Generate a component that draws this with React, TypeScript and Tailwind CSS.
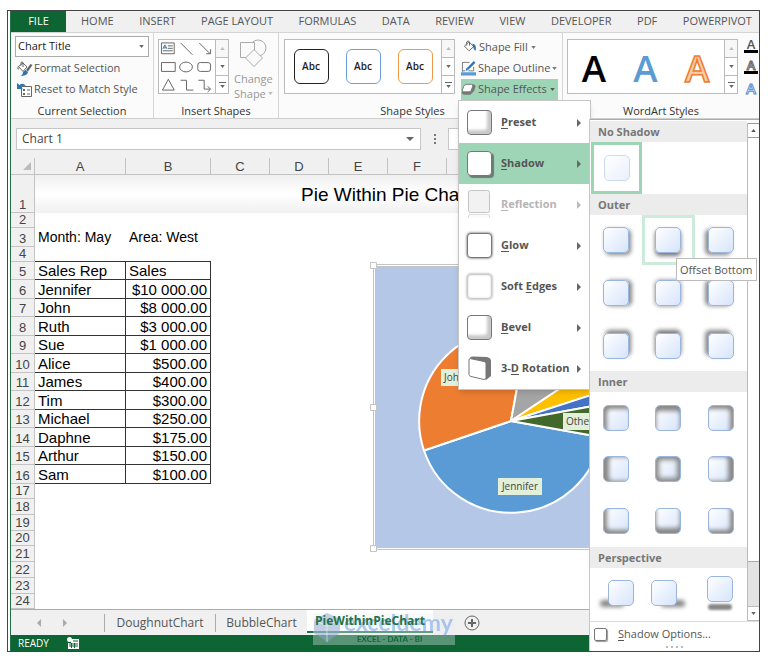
import clsx from 'clsx';

const ribbonTabs = ['HOME', 'INSERT', 'PAGE LAYOUT', 'FORMULAS', 'DATA', 'REVIEW', 'VIEW', 'DEVELOPER', 'PDF', 'POWERPIVOT'];

const sales = [
  ['Jennifer', '$10 000.00'],
  ['John', '$8 000.00'],
  ['Ruth', '$3 000.00'],
  ['Sue', '$1 000.00'],
  ['Alice', '$500.00'],
  ['James', '$400.00'],
  ['Tim', '$300.00'],
  ['Michael', '$250.00'],
  ['Daphne', '$175.00'],
  ['Arthur', '$150.00'],
  ['Sam', '$100.00'],
];

const effects = [
  { pre: '', key: 'P', rest: 'reset', icon: 'border-[#777] shadow-[inset_-4px_-4px_3px_#c9c9c9]' },
  { pre: '', key: 'S', rest: 'hadow', icon: 'border-[#777] shadow-[2px_2px_1px_#6b7a72]', active: true },
  { pre: '', key: 'R', rest: 'eflection', icon: 'reflection', disabled: true },
  { pre: '', key: 'G', rest: 'low', icon: 'border-[#777] shadow-[0_0_2px_1px_#aaa]' },
  { pre: 'Soft ', key: 'E', rest: 'dges', icon: 'border-[#ccc] shadow-[0_0_2px_1px_#ccc,inset_0_0_2px_#ccc]' },
  { pre: '', key: 'B', rest: 'evel', icon: 'border-[#777] shadow-[inset_-4px_-4px_3px_#c9c9c9]' },
  { pre: '3-', key: 'D', rest: ' Rotation', icon: 'cube' },
];

const outer = [
  { name: 'Offset Diagonal Bottom Right', look: 'shadow-[2px_2px_4px_#888]' },
  { name: 'Offset Bottom', look: 'shadow-[0_3px_4px_#777]' },
  { name: 'Offset Diagonal Bottom Left', look: 'shadow-[-3px_2px_4px_#888]' },
  { name: 'Offset Right', look: 'shadow-[3px_0_4px_#888]' },
  { name: 'Offset Center', look: 'shadow-[0_0_4px_#888]' },
  { name: 'Offset Left', look: 'shadow-[-3px_0_4px_#888]' },
  { name: 'Offset Diagonal Top Right', look: 'shadow-[2px_-3px_4px_#888]' },
  { name: 'Offset Top', look: 'shadow-[0_-3px_4px_#777]' },
  { name: 'Offset Diagonal Top Left', look: 'shadow-[-3px_-3px_4px_#888]' },
];

const inner = [
  { name: 'Inside Diagonal Top Left', look: 'shadow-[inset_3px_3px_4px_#888]' },
  { name: 'Inside Top', look: 'shadow-[inset_0_5px_4px_#888]' },
  { name: 'Inside Diagonal Top Right', look: 'shadow-[inset_-3px_3px_4px_#888]' },
  { name: 'Inside Left', look: 'shadow-[inset_5px_0_4px_#888]' },
  { name: 'Inside Center', look: 'shadow-[inset_0_0_5px_3px_#888]' },
  { name: 'Inside Right', look: 'shadow-[inset_-5px_0_4px_#888]' },
  { name: 'Inside Diagonal Bottom Left', look: 'shadow-[inset_3px_-3px_4px_#888]' },
  { name: 'Inside Bottom', look: 'shadow-[inset_0_-5px_4px_#888]' },
  { name: 'Inside Diagonal Bottom Right', look: 'shadow-[inset_-3px_-3px_4px_#888]' },
];

function Caret({ className = 'text-[#666]' }: { className?: string }) {
  return (
    <svg viewBox="0 0 6 4" className={clsx('h-[3px] w-[5px] shrink-0 fill-current', className)}>
      <path d="M0 0h6L3 4z" />
    </svg>
  );
}

function Arrow({ className = 'fill-[#666]' }: { className?: string }) {
  return (
    <svg viewBox="0 0 4 8" className={clsx('h-2 w-1 shrink-0', className)}>
      <path d="M0 0l4 4-4 4z" />
    </svg>
  );
}

/* up / down / more buttons at the right of a gallery */
function GalleryScroll() {
  return (
    <div className="flex w-[13px] shrink-0 flex-col border-l border-[#bbb]">
      <button aria-label="Scroll up" className="flex flex-1 items-center justify-center bg-[#f7f7f7]">
        <Caret className="rotate-180 text-[#bbb]" />
      </button>
      <button aria-label="Scroll down" className="flex flex-1 items-center justify-center border-y border-[#bbb]">
        <Caret />
      </button>
      <button aria-label="More" className="flex flex-1 flex-col items-center justify-center gap-[2px]">
        <span className="h-px w-[7px] bg-[#666]" />
        <Caret />
      </button>
    </div>
  );
}

function GroupLabel({ children }: { children: string }) {
  return <div className="mt-auto text-center text-[11px] leading-[15px] text-[#333]">{children}</div>;
}

function CurrentSelection() {
  return (
    <section className="flex w-[142px] shrink-0 flex-col">
      <div className="relative mx-1 mt-[3px]">
        <select aria-label="Chart element" className="block h-[21px] w-[134px] appearance-none border border-[#ababab] bg-white pl-[2px] text-[11px] text-[#222]">
          <option>Chart Title</option>
        </select>
        <span className="pointer-events-none absolute top-[9px] right-[5px] flex">
          <Caret />
        </span>
      </div>
      <button className="mt-px flex h-[21px] items-center gap-px pl-[6px] text-[11px]">
        <svg viewBox="0 0 16 16" className="h-4 w-4">
          <path d="M1.500 5.500l4.500-3.500 4 4-4 4.500z" fill="#fff" stroke="#666" />
          <path d="M4 4.500V1.500q1-1 2 0V6" fill="none" stroke="#666" />
          <path d="M1 5q-1.500 3.500 1 3.500z" fill="#666" />
          <path d="M15.500 4l-4.500 6.500-2-1.500 4.500-6z" fill="#666" />
          <path d="M8.500 9l2.500 2q-.500 4-8 4 3-1 3-4z" fill="#2f75b5" />
        </svg>
        Format Selection
      </button>
      <button className="flex h-[21px] items-center gap-px pl-[6px] text-[11px]">
        <svg viewBox="0 0 16 16" className="h-4 w-4">
          <path d="M4.500 4.500h10v10h-10z" fill="#fff" stroke="#666" />
          <path d="M6 7h2v2H6zM6 11h2v2H6zM10 7.500h3v1h-3zM10 11.500h3v1h-3z" fill="#666" />
          <path d="M0 1v6h6L4 5q2-2 5-1-3-4-6.500-1z" fill="#2f75b5" />
        </svg>
        Reset to Match Style
      </button>
      <GroupLabel>Current Selection</GroupLabel>
    </section>
  );
}

function InsertShapes() {
  return (
    <section className="flex w-[125px] shrink-0 flex-col border-l border-[#d6d6d6]">
      <div className="mt-[6px] ml-1 flex gap-[5px]">
        <div className="flex h-[55px] w-[71px] shrink-0 border border-[#bbb] bg-white">
          <svg viewBox="0 0 57 53" className="h-[53px] w-[57px] fill-none stroke-[#666]">
            <path d="M2.500 2.500h13v11h-13z" />
            <path d="M9 5.500h5M9 8h5M4 10.500h10" />
            <path d="M4 8.500l2-4 2 4M4.500 7.500h3" stroke="#2f75b5" />
            <path d="M22 2.500l12 12M41 2.500l11 11M52.500 9v4.500H48" />
            <path d="M2.500 22.500h14v9h-14z" />
            <ellipse cx="27.500" cy="27" rx="6.500" ry="5" />
            <rect x="39.500" y="22.500" width="13" height="9" rx="2.500" />
            <path d="M9.500 39.500l6 11h-12zM22 40.500h6v10h7M40 40.500h6v9h6M49.500 46.500l3 3-3 3" />
          </svg>
          <GalleryScroll />
        </div>
        <button disabled className="flex flex-col items-center text-[11px] leading-[15px] text-[#999]">
          <svg viewBox="0 0 28 28" className="mb-1 h-7 w-7 fill-[#fafafa] stroke-[#aaa]">
            <circle cx="19" cy="9" r="8" />
            <path d="M1.500 3.500h14v15h-14z" />
            <path d="M15 10.500l8.500 8.500-8.500 8.500L6.500 19z" />
          </svg>
          <span>Change</span>
          <span className="flex items-center gap-[2px]">
            Shape <Caret className="text-[#bbb]" />
          </span>
        </button>
      </div>
      <GroupLabel>Insert Shapes</GroupLabel>
    </section>
  );
}

function ShapeStyles() {
  return (
    <section className="flex w-[284px] shrink-0 flex-col border-l border-[#d6d6d6]">
      <div className="flex">
        <div className="mt-[6px] ml-[5px] flex h-[55px] w-[171px] shrink-0 border border-[#bbb] bg-white">
          <div className="flex flex-1 items-center justify-around text-[10px] font-semibold text-[#222]">
            <button className="h-[35px] w-[35px] rounded-md border border-[#222]">Abc</button>
            <button className="h-[35px] w-[35px] rounded-md border border-[#6f9fd8]">Abc</button>
            <button className="h-[35px] w-[35px] rounded-md border border-[#ee9a4a]">Abc</button>
          </div>
          <GalleryScroll />
        </div>
        <div className="ml-[6px] flex flex-col pt-[4px] text-[11px]">
          <button className="flex h-[21px] items-center gap-[2px] pl-px">
            <svg viewBox="0 0 16 16" className="h-[15px] w-[15px]">
              <path d="M2.500 6.500l5-4.500 5 5-5 4.500z" fill="#fff" stroke="#666" />
              <path d="M5 6V2q1.500-2 3 0v4" fill="none" stroke="#666" />
              <path d="M11 4q5 0 3.500 7.500-1.500 0-2.500-4z" fill="#2f75b5" />
            </svg>
            Shape Fill <Caret className="ml-px text-[#777]" />
          </button>
          <button className="flex h-[21px] items-center gap-[2px]">
            <svg viewBox="0 0 16 16" className="h-[15px] w-[15px]">
              <path d="M9 1.500H1.500v10M1.500 10.500h3M13.500 6v4.500H8" fill="none" stroke="#777" />
              <path d="M14.500 1L7 8.500" fill="none" stroke="#2f75b5" strokeWidth="2.500" />
              <path d="M5 10.500l.500-3 2.500 2z" fill="#2f75b5" />
              <path d="M0 12h16v3.500H0z" fill="#5b9bd5" />
            </svg>
            Shape Outline <Caret className="text-[#777]" />
          </button>
          <button className="flex h-[21px] w-[97px] items-center gap-[2px] bg-[#9fd5b7]">
            <svg viewBox="0 0 16 16" className="h-[15px] w-[15px]">
              <path d="M6 2.500h7q2 0 2.500 2l-1.500 5-4 4H4q-2.500 0-3.500-2z" fill="#777" />
              <path d="M6 2.500h5q2 0 1.500 2l-1.500 4q-.500 2-2.500 2H3q-2 0-1.500-2l1.500-4q.500-2 3-2z" fill="#fff" stroke="#777" />
            </svg>
            Shape Effects <Caret className="ml-px text-[#555]" />
          </button>
        </div>
      </div>
      <div className="mt-auto pr-4">
        <GroupLabel>Shape Styles</GroupLabel>
      </div>
    </section>
  );
}

function WordArtStyles() {
  return (
    <section className="flex min-w-0 flex-1 flex-col border-l border-[#d6d6d6]">
      <div className="flex">
        <div className="mt-[6px] ml-1 flex h-[55px] w-[171px] shrink-0 border border-[#bbb] bg-white">
          <svg viewBox="0 0 157 53" className="h-[53px] w-[157px]" fontFamily="Open Sans, sans-serif" fontSize="37" fontWeight="600" textAnchor="middle">
            <text x="26" y="42" fill="#000">A</text>
            <text x="78" y="42" fill="#5b9bd5">A</text>
            <text x="130" y="42" fill="#f8cba4" stroke="#ed7d31" strokeWidth="1.500">A</text>
          </svg>
          <GalleryScroll />
        </div>
        <svg viewBox="0 0 16 64" className="mt-1 ml-[5px] h-16 w-4 shrink-0" fontFamily="Open Sans, sans-serif" fontSize="13" fontWeight="600" textAnchor="middle">
          <text x="8" y="12" fill="#555">A</text>
          <path d="M1 13h14v3H1zM1 34h14v3H1z" fill="#000" />
          <text x="8" y="33" fill="#fff" stroke="#666">A</text>
          <text x="8" y="57" fill="#fff" stroke="#5b8fd0" fontSize="15">A</text>
        </svg>
      </div>
      <GroupLabel>WordArt Styles</GroupLabel>
    </section>
  );
}

function RowHead({ n, h }: { n: number; h: string }) {
  return (
    <th scope="row" className={clsx('border-r border-b border-[#c3c3c3] bg-[#f0f0f0] p-0 align-bottom text-[13px] leading-[14px] font-normal text-[#444]', h)}>
      {n}
    </th>
  );
}

function Sheet() {
  return (
    <div className="relative">
      <table className="w-full table-fixed border-separate border-spacing-0 bg-white font-['Liberation_Sans',Arial,sans-serif] text-[15px] leading-[17px] text-black">
        <colgroup>
          <col className="w-[24px]" />
          <col className="w-[91px]" />
          <col className="w-[85px]" />
          <col className="w-[59px]" />
          <col className="w-[59px]" />
          <col className="w-[59px]" />
          <col className="w-[59px]" />
          <col />
        </colgroup>
        <thead>
          <tr className="bg-[#f0f0f0] text-[13px] leading-[15px] text-[#444]">
            <td className="border-r border-b border-[#c3c3c3] p-0">
              <svg viewBox="0 0 8 8" className="mr-[3px] ml-auto h-2 w-2 fill-[#bbb]">
                <path d="M8 0v8H0z" />
              </svg>
            </td>
            {['A', 'B', 'C', 'D', 'E', 'F', 'G'].map(c => (
              <th key={c} scope="col" className="h-[17px] border-r border-b border-[#c3c3c3] p-0 font-normal">{c}</th>
            ))}
          </tr>
        </thead>
        <tbody>
          <tr>
            <RowHead n={1} h="h-[38px]" />
            <td colSpan={7} className="bg-linear-to-b from-[#f0f0f0] via-white to-[#f0f0f0] p-0 pl-[266px] text-[19px]">
              Pie Within Pie Chart
            </td>
          </tr>
          <tr>
            <RowHead n={2} h="h-[15px]" />
            <td colSpan={7} className="p-0" />
          </tr>
          <tr className="text-[14px]">
            <RowHead n={3} h="h-[19px]" />
            <td className="p-0 pl-[3px]">Month: May</td>
            <td className="p-0 pl-[3px]">Area: West</td>
            <td colSpan={5} className="p-0" />
          </tr>
          <tr>
            <RowHead n={4} h="h-[15px]" />
            <td colSpan={2} className="border-b border-[#333] p-0" />
            <td colSpan={5} className="p-0" />
          </tr>
          <tr>
            <RowHead n={5} h="h-[18px]" />
            <td className="border-r border-b border-[#333] p-0 pl-[3px]">Sales Rep</td>
            <td className="border-r border-b border-[#333] p-0 pl-[3px]">Sales</td>
            <td colSpan={5} className="p-0" />
          </tr>
          {sales.map(([name, amount], i) => (
            <tr key={name}>
              <RowHead n={i + 6} h={i % 2 ? 'h-[18px]' : 'h-[19px]'} />
              <td className="border-r border-b border-[#333] p-0 pl-[3px]">{name}</td>
              <td className="border-r border-b border-[#333] p-0 pr-[3px] text-right">{amount}</td>
              <td colSpan={5} className="p-0" />
            </tr>
          ))}
          {[17, 18, 19, 20, 21, 22, 23, 24].map(n => (
            <tr key={n}>
              <RowHead n={n} h={n === 17 || n === 20 || n === 24 ? 'h-[15px]' : 'h-[16px]'} />
              <td colSpan={7} className="p-0" />
            </tr>
          ))}
        </tbody>
      </table>

      {/* embedded chart, floats over the cells */}
      <div className="absolute top-[104px] right-0 left-[359px] h-[290px] overflow-hidden">
        <svg viewBox="0 0 400 290" className="h-[290px] w-[400px]" fontFamily="Open Sans, sans-serif" fontSize="10">
          <rect x="3.500" y="2.500" width="420" height="285" fill="#fff" stroke="#c4c4c4" />
          <rect x="5.500" y="4.500" width="420" height="281" fill="#b4c7e7" stroke="#c4c4c4" />
          <g transform="translate(141 159)" stroke="#fff" strokeWidth="2" strokeLinejoin="round">
            <path d="M0 0L90.600 16.300A92 92 0 0 1 -87 29.500z" fill="#5b9bd5" />
            <path d="M0 0L-87 29.500A92 92 0 0 1 16.600 -90.500z" fill="#ed7d31" />
            <path d="M0 0L16.600 -90.500A92 92 0 0 1 76.700 -50.900z" fill="#a5a5a5" />
            <path d="M0 0L76.700 -50.900A92 92 0 0 1 87.500 -28.400z" fill="#ffc000" />
            <path d="M0 0L87.500 -28.400A92 92 0 0 1 90.500 -16.600z" fill="#4472c4" />
            <path d="M0 0L90.500 -16.600A92 92 0 0 1 90.600 16.300z" fill="#43682b" />
          </g>
          <g fill="#e2efd9">
            <path d="M71 107h40v17H71zM193 151h40v17h-40zM128 216h44v17h-44z" />
          </g>
          <g fill="#444">
            <text x="74" y="119">John</text>
            <text x="196" y="163">Other</text>
            <text x="150" y="228" textAnchor="middle">Jennifer</text>
          </g>
          <g fill="#fff" stroke="#c4c4c4">
            <path d="M.500 .500h6v6h-6zM.500 142.500h6v6h-6zM.500 283.500h6v6h-6z" />
          </g>
        </svg>
      </div>
    </div>
  );
}

function SheetTabs() {
  return (
    <div className="relative">
      <nav className="flex h-[26px] items-center border-t border-[#ababab] bg-[#f0f0f0] text-[12px] text-[#555]">
        <div className="flex w-[93px] shrink-0 items-center gap-[22px] pl-[26px]">
          <button aria-label="Previous sheet"><Arrow className="rotate-180 fill-[#aaa]" /></button>
          <button aria-label="Next sheet"><Arrow className="fill-[#aaa]" /></button>
        </div>
        <button className="h-[18px] w-[111px] shrink-0 border-l border-[#ababab] leading-[18px]">DoughnutChart</button>
        <button className="h-[18px] w-[92px] shrink-0 border-l border-[#ababab] leading-[18px]">BubbleChart</button>
        <button className="h-[23px] w-[126px] shrink-0 self-start border-b-2 border-[#217346] bg-white text-[12px] font-bold text-[#217346]">
          <span className="relative z-10">PieWithinPieChart</span>
        </button>
        <button aria-label="New sheet" className="ml-[31px]">
          <svg viewBox="0 0 16 16" className="h-4 w-4 fill-none stroke-[#666]">
            <circle cx="8" cy="8" r="7" />
            <path d="M8 4v8M4 8h8" strokeWidth="2" />
          </svg>
        </button>
      </nav>
      <footer className="flex h-[16px] items-center gap-[18px] bg-[#0c6533] pl-[7px] text-[10px] text-white">
        READY
        <svg viewBox="0 0 12 12" className="h-3 w-3">
          <path d="M4 2h8v10H1V6h3z" fill="#fff" />
          <circle cx="2.500" cy="2.500" r="2.500" fill="#fff" />
          <path d="M6 4h5M2 7h9M2 9h9M4.500 6v5M7.500 6v5" stroke="#0c6533" />
        </svg>
      </footer>
      {/* publisher stamp */}
      <svg viewBox="0 0 142 32" className="absolute top-1 left-[302px] h-8 w-[142px]" fontFamily="Lato, sans-serif" fontWeight="700">
        <path d="M0 0h142v32H0z" fill="#e8eef0" opacity=".35" />
        <path d="M14 0l13 6v14l-13 9L1 20V7z" fill="#8ba4cc" opacity=".5" />
        <path d="M1 7l13 6 13-7M14 13v16" fill="none" stroke="#fff" opacity=".5" />
        <text x="31" y="18" fontSize="23" fill="#7da7e8" opacity=".6">exceldemy</text>
        <text x="44" y="29" fontSize="8" fill="#0c6533" opacity=".9">EXCEL - DATA - BI</text>
      </svg>
    </div>
  );
}

function EffectIcon({ icon }: { icon: string }) {
  if (icon === 'cube') {
    return (
      <svg viewBox="0 0 25 25" className="h-[25px] w-[25px]">
        <path d="M3 1.500Q4 .500 6 .500l14 .500q4 1 4 4v15l-5 4z" fill="#777" />
        <path d="M3 2.500l14 3q2 .500 2 2v14q0 2-2 2l-13-3q-2-.500-2-2V4q0-1.500 1-1.500z" fill="#fff" stroke="#777" />
      </svg>
    );
  }
  if (icon === 'reflection') {
    return (
      <svg viewBox="0 0 25 29" className="h-[29px] w-[25px] fill-[#f2f2f2] stroke-[#c4c4c4]">
        <rect x="1.500" y=".500" width="21" height="22" rx="2" />
        <path d="M1.500 28v-2q0-1.500 1.500-1.500h18q1.500 0 1.500 1.500v2" fill="#fafafa" stroke="#ddd" />
      </svg>
    );
  }
  return <span className={clsx('h-[25px] w-[25px] rounded-sm border bg-white', icon)} />;
}

function EffectsMenu() {
  return (
    <div role="menu" className="absolute top-[89px] left-[450px] w-[133px] border border-[#c6c6c6] bg-white pt-px shadow-md">
      {effects.map(e => (
        <button
          key={e.key}
          role="menuitem"
          disabled={e.disabled}
          className={clsx('flex h-[41px] w-full items-center pl-[8px] text-[11px] font-bold', e.active && 'bg-[#9fd5b7]', e.disabled ? 'text-[#b5b5b5]' : 'text-[#555]')}
        >
          <EffectIcon icon={e.icon} />
          <span className="ml-[9px] flex-1 text-left">
            {e.pre}
            <u className="underline-offset-2">{e.key}</u>
            {e.rest}
          </span>
          <Arrow className={clsx('mr-[9px]', e.disabled ? 'fill-[#bbb]' : 'fill-[#666]')} />
        </button>
      ))}
    </div>
  );
}

function Heading({ children }: { children: string }) {
  return <h3 className="h-[21px] bg-[#ececec] pl-2 text-[11px] leading-[21px] font-bold text-[#777]">{children}</h3>;
}

function Swatch({ look }: { look: string }) {
  return <span className={clsx('block h-[26px] w-[26px] rounded-[5px] border border-[#9ab5e0] bg-linear-to-br from-white to-[#d6e4fa]', look)} />;
}

function ShadowGallery() {
  return (
    <div className="absolute top-[108px] right-0 bottom-0 left-[581px] flex flex-col border-l border-[#c6c6c6] bg-white">
      <div className="flex flex-1 border-t border-[#ababab]">
        <div className="flex-1 pt-px">
          <Heading>No Shadow</Heading>
          <button aria-label="No Shadow" className="ml-px flex h-[52px] w-[51px] items-center justify-center border-[3px] border-[#9fd5b7]">
            <Swatch look="opacity-50" />
          </button>
          <Heading>Outer</Heading>
          <div className="relative grid h-[156px] grid-cols-3 grid-rows-[50px_56px_50px]">
            {outer.map((s, i) => (
              <button key={s.name} aria-label={s.name} className={clsx('flex items-center justify-center', i === 1 && 'border-[3px] border-[#cdebda]')}>
                <Swatch look={s.look} />
              </button>
            ))}
            <div role="tooltip" className="absolute top-[43px] left-[86px] border border-[#bbb] bg-white px-[3px] text-[11px] leading-[21px] whitespace-nowrap text-[#555]">
              Offset Bottom
            </div>
          </div>
          <Heading>Inner</Heading>
          <div className="grid h-[155px] grid-cols-3">
            {inner.map(s => (
              <button key={s.name} aria-label={s.name} className="flex items-center justify-center">
                <Swatch look={s.look} />
              </button>
            ))}
          </div>
          <Heading>Perspective</Heading>
          <div className="flex h-[50px] items-center pl-[18px]">
            <button aria-label="Perspective Diagonal Upper Left" className="relative">
              <span className="absolute -bottom-px -left-2 h-[7px] w-6 rounded-full bg-[#888] blur-[2px]" />
              <span className="relative block"><Swatch look="" /></span>
            </button>
            <button aria-label="Perspective Diagonal Upper Right" className="relative ml-[17px]">
              <span className="absolute -right-2 -bottom-px h-[7px] w-6 rounded-full bg-[#888] blur-[2px]" />
              <span className="relative block"><Swatch look="" /></span>
            </button>
            <button aria-label="Below" className="ml-[30px] flex flex-col items-center gap-[2px]">
              <Swatch look="" />
              <span className="h-[6px] w-6 rounded-full bg-[#888] blur-[1px]" />
            </button>
          </div>
        </div>
        <div className="mt-[3px] flex w-[12px] shrink-0 flex-col border-l border-[#bbb]">
          <button aria-label="Scroll up" className="flex h-[15px] items-center justify-center border-y border-[#999]">
            <Caret className="rotate-180" />
          </button>
          <div className="flex-1 border-b border-[#aaa]" />
          <div className="h-[44px] bg-[#e3e3e3]" />
          <button aria-label="Scroll down" className="flex h-[15px] items-center justify-center border-y border-[#bbb]">
            <Caret />
          </button>
        </div>
      </div>
      <div className="h-[30px] border-t border-[#ddd]">
        <button className="flex h-[24px] items-center gap-[11px] pl-1 text-[11px] text-[#555]">
          <span className="h-[13px] w-[13px] rounded-xs border border-[#777] shadow-[1px_1px_1px_#999]" />
          <span><u className="underline-offset-2">S</u>hadow Options...</span>
        </button>
        <div className="flex justify-center gap-[3px]">
          {[0, 1, 2, 3].map(i => <span key={i} className="h-[2px] w-[2px] bg-[#bbb]" />)}
        </div>
      </div>
    </div>
  );
}

export default function App() {
  return (
    <div className="bg-white pt-[10px] pr-2 pb-2 pl-[7px] font-['Open_Sans','Noto_Sans',sans-serif] text-[#555]">
      <div className="relative border border-[#444] bg-white pl-[2px]">
        <div className="overflow-hidden border-l border-[#217346] bg-[#f0f0f0]">
          <div className="flex h-[22px] items-stretch border-b border-[#d4d4d4] text-[11px]">
            <button className="w-[55px] shrink-0 bg-[#0c6533] text-white">FILE</button>
            <nav className="flex flex-1 justify-between pr-[7px] pl-[15px]">
              {ribbonTabs.map(t => <button key={t} className="whitespace-nowrap">{t}</button>)}
            </nav>
          </div>

          <div className="flex h-[86px] border-b border-[#cfcfcf] bg-[#fbfbfb] whitespace-nowrap">
            <CurrentSelection />
            <InsertShapes />
            <ShapeStyles />
            <WordArtStyles />
          </div>

          <div className="flex h-[39px] items-center pl-[5px]">
            <div className="flex h-[22px] w-[405px] shrink-0 items-center border border-[#c6c6c6] bg-white">
              <input aria-label="Name box" defaultValue="Chart 1" className="min-w-0 flex-1 pl-[5px] text-[12px] text-[#444]" />
              <button aria-label="Open name list" className="mr-[6px]">
                <svg viewBox="0 0 8 4" className="h-1 w-2 fill-[#666]"><path d="M0 0h8L4 4z" /></svg>
              </button>
            </div>
            <div className="flex w-[27px] shrink-0 flex-col items-center gap-[2px]">
              {[0, 1, 2].map(i => <span key={i} className="h-[2px] w-[2px] bg-[#777]" />)}
            </div>
            <input aria-label="Formula bar" className="h-[22px] min-w-0 flex-1 border border-[#c6c6c6] bg-white" />
          </div>

          <Sheet />
          <SheetTabs />
        </div>
        <EffectsMenu />
        <ShadowGallery />
      </div>
    </div>
  );
}
